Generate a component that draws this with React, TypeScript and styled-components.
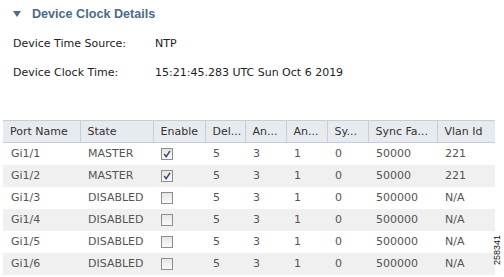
import React from "react";
import styled, { createGlobalStyle } from "styled-components";

const Global = createGlobalStyle`
  html, body {
    margin: 0;
    padding: 0;
    background: #ffffff;
  }
  body {
    font-family: "DejaVu Sans", Verdana, sans-serif;
    font-size: 11px;
    color: #222;
  }
`;

const Page = styled.div`
  position: relative;
  width: 504px;
  height: 277px;
  overflow: hidden;
  background: #fff;
`;

const SectionHead = styled.div`
  display: flex;
  align-items: center;
  gap: 11px;
  height: 28px;
  padding-left: 13px;
  color: #4d6a88;
  font-family: "Liberation Sans", Arial, sans-serif;
  font-weight: bold;
  font-size: 12.6px;
`;

const Details = styled.div`
  display: grid;
  grid-template-columns: 142px auto;
  padding: 1px 0 0 13px;
`;

const Label = styled.div`
  height: 29px;
  line-height: 29px;
  color: #222;
`;

const Value = styled(Label)``;

const Table = styled.table`
  margin: 33px 0 0 3px;
  width: 492px;
  border-collapse: collapse;
  table-layout: fixed;
`;

const Th = styled.th<{ $w: number }>`
  box-sizing: border-box;
  width: ${(p) => p.$w}px;
  height: 22px;
  padding: 0 0 0 7px;
  text-align: left;
  font-weight: normal;
  color: #333;
  background: #e7eaee;
  border-top: 1px solid #c6ced8;
  border-bottom: 1px solid #c6ced8;
  border-left: 1px solid #c6ced8;
  white-space: nowrap;
  overflow: hidden;
  &:first-child {
    border-left: none;
  }
`;

const Tr = styled.tr<{ $shade: boolean }>`
  background: ${(p) => (p.$shade ? "#f0f0f0" : "#ffffff")};
`;

const Td = styled.td`
  box-sizing: border-box;
  height: 22px;
  padding: 0 0 0 8px;
  color: #555;
  white-space: nowrap;
  overflow: hidden;
`;

const Box = styled.span`
  box-sizing: border-box;
  display: inline-flex;
  align-items: center;
  justify-content: center;
  width: 12px;
  height: 12px;
  border: 1px solid #8e8e8e;
  background: linear-gradient(#e6e6e6, #fafafa);
  vertical-align: middle;
`;

const FigId = styled.div`
  position: absolute;
  right: 2px;
  bottom: 12px;
  writing-mode: vertical-rl;
  transform: rotate(180deg);
  font-family: "Liberation Sans", Arial, sans-serif;
  font-size: 9px;
  color: #111;
`;

const Check = ({ on }: { on: boolean }) => (
  <Box>
    {on && (
      <svg width="8" height="8" viewBox="0 0 8 8">
        <path d="M1.2 4 L3.2 6.6 L7 0.8" fill="none" stroke="#3a4a78" strokeWidth="1.5" />
      </svg>
    )}
  </Box>
);

const cols: [string, number][] = [
  ["Port Name", 77],
  ["State", 73],
  ["Enable", 52],
  ["Del...", 40],
  ["An...", 41],
  ["An...", 41],
  ["Sy...", 41],
  ["Sync Fa...", 69],
  ["Vlan Id", 58],
];

const rows = [
  ["Gi1/1", "MASTER", true, "5", "3", "1", "0", "50000", "221"],
  ["Gi1/2", "MASTER", true, "5", "3", "1", "0", "50000", "221"],
  ["Gi1/3", "DISABLED", false, "5", "3", "1", "0", "500000", "N/A"],
  ["Gi1/4", "DISABLED", false, "5", "3", "1", "0", "500000", "N/A"],
  ["Gi1/5", "DISABLED", false, "5", "3", "1", "0", "500000", "N/A"],
  ["Gi1/6", "DISABLED", false, "5", "3", "1", "0", "500000", "N/A"],
] as const;

export default function App() {
  return (
    <Page>
      <Global />
      <SectionHead>
        <svg width="8" height="6" viewBox="0 0 8 6">
          <path d="M0 0 H8 L4 6 Z" fill="#4d6a88" />
        </svg>
        Device Clock Details
      </SectionHead>
      <Details>
        <Label>Device Time Source:</Label>
        <Value>NTP</Value>
        <Label>Device Clock Time:</Label>
        <Value>15:21:45.283 UTC Sun Oct 6 2019</Value>
      </Details>
      <Table>
        <thead>
          <tr>
            {cols.map(([name, w], i) => (
              <Th key={i} $w={w}>
                {name}
              </Th>
            ))}
          </tr>
        </thead>
        <tbody>
          {rows.map((r, i) => (
            <Tr key={i} $shade={i % 2 === 1}>
              {r.map((c, j) => (
                <Td key={j}>{typeof c === "boolean" ? <Check on={c} /> : c}</Td>
              ))}
            </Tr>
          ))}
        </tbody>
      </Table>
      <FigId>258341</FigId>
    </Page>
  );
}
